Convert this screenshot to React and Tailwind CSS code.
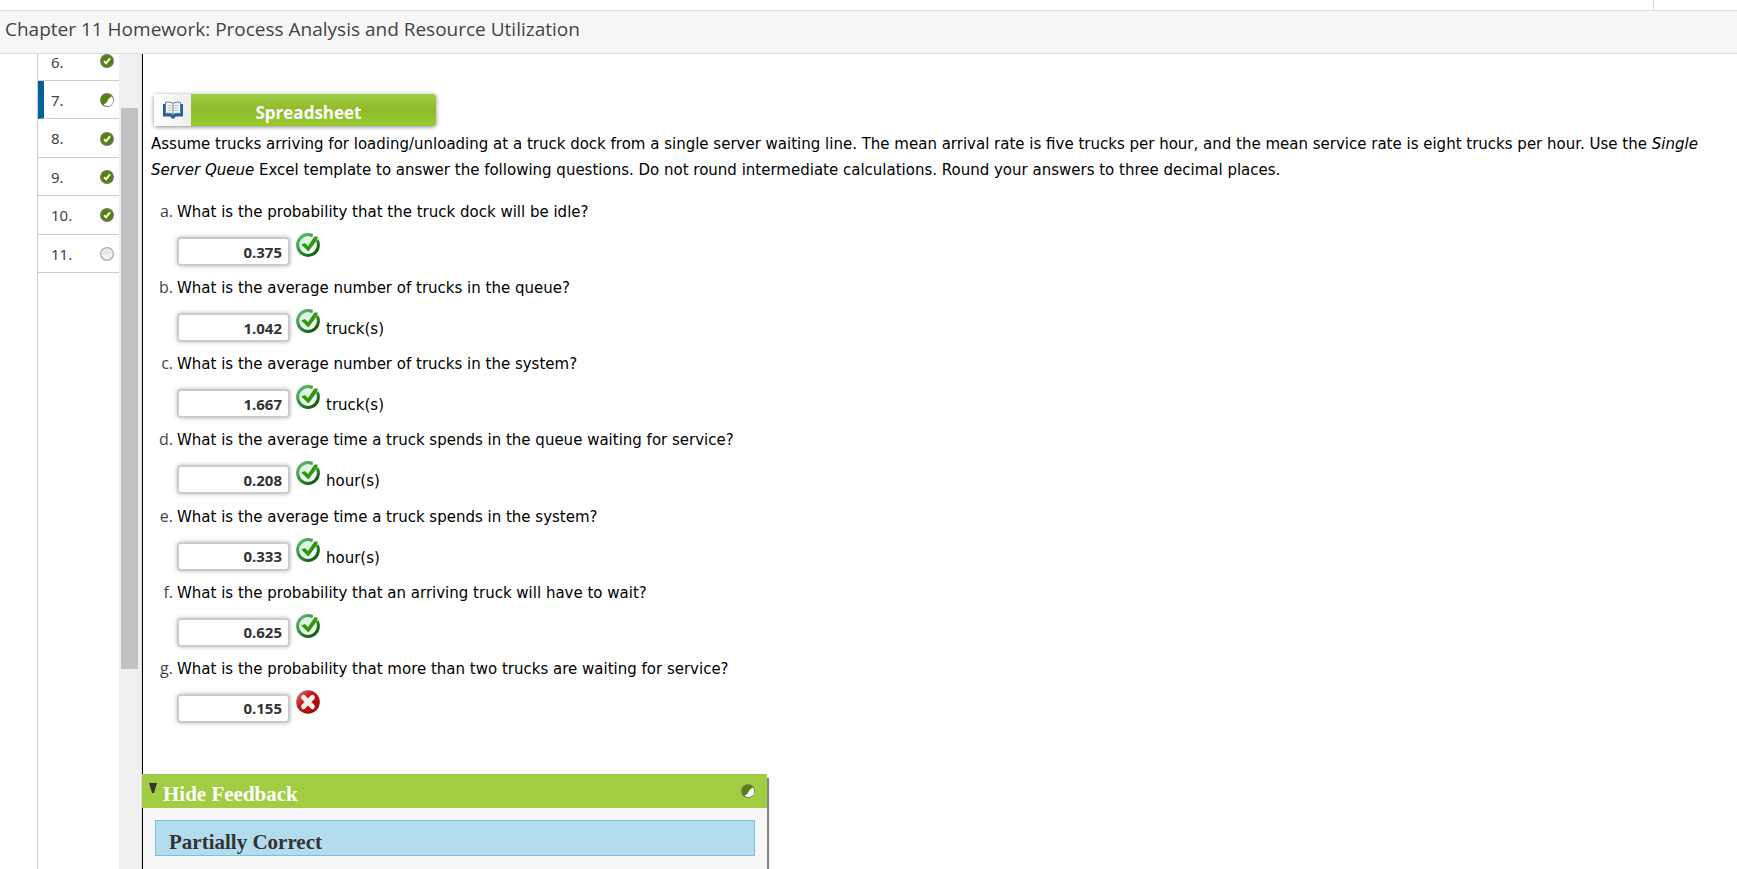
import React from 'react';

const steps = [
    { number: 7, status: 'partial', active: true },
    { number: 8, status: 'correct' },
    { number: 9, status: 'correct' },
    { number: 10, status: 'correct' },
    { number: 11, status: 'empty' },
];

const questions = [
    { letter: 'a', text: 'What is the probability that the truck dock will be idle?', value: '0.375', correct: true },
    { letter: 'b', text: 'What is the average number of trucks in the queue?', value: '1.042', unit: 'truck(s)', correct: true },
    { letter: 'c', text: 'What is the average number of trucks in the system?', value: '1.667', unit: 'truck(s)', correct: true },
    { letter: 'd', text: 'What is the average time a truck spends in the queue waiting for service?', value: '0.208', unit: 'hour(s)', correct: true },
    { letter: 'e', text: 'What is the average time a truck spends in the system?', value: '0.333', unit: 'hour(s)', correct: true },
    { letter: 'f', text: 'What is the probability that an arriving truck will have to wait?', value: '0.625', correct: true },
    { letter: 'g', text: 'What is the probability that more than two trucks are waiting for service?', value: '0.155', correct: false },
];

const StatusDot = ({ status }) => {
    if (status === 'empty') {
        return (
            <svg viewBox="0 0 14 14" className="size-3.5 shrink-0">
                <circle cx="7" cy="7" r="6.3" fill="#f1f1f1" stroke="#a8a8a8" strokeWidth="1.2" />
                <path d="M2.6 7a4.4 4.4 0 0 1 8.800 0z" fill="#e4e4e4" />
            </svg>
        );
    }
    return (
        <svg viewBox="0 0 14 14" className="size-3.5 shrink-0">
            <circle cx="7" cy="7" r="6.2" fill="#4f8500" stroke="#6d7955" strokeWidth="1.5" />
            {status === 'correct' && (
                <path d="M4 7.2 6.1 9.2 10 4.400" fill="none" stroke="#fff" strokeWidth="2" />
            )}
            {status === 'partial' && <path d="M11.6 3.6A5.6 5.6 0 0 1 3.6 11.6Q6.500 10.500 7.500 8T11.600 3.600Z" fill="#fff" />}
        </svg>
    );
};

const CorrectIcon = () => (
    <svg viewBox="0 0 24 24" className="size-6 shrink-0" role="img" aria-label="Correct">
        <defs>
            <linearGradient id="ring" x1="0" y1="0" x2="0.8" y2="1">
                <stop offset="0" stopColor="#63bd78" />
                <stop offset="0.5" stopColor="#3b9440" />
                <stop offset="1" stopColor="#0c5a10" />
            </linearGradient>
            <linearGradient id="face" x1="0" y1="0" x2="1" y2="1">
                <stop offset="0" stopColor="#cdeed6" />
                <stop offset="1" stopColor="#ffffff" />
            </linearGradient>
        </defs>
        <circle cx="12" cy="12" r="10.4" fill="url(#face)" stroke="url(#ring)" strokeWidth="3" />
        <path d="M17 1 22.800 1 22.800 6 20.500 8 16 6Z" fill="#fff" />
        <path d="M5.200 11.400 8.800 10 12 13 18.400 3.600 21.600 3.400 21.400 6.600 12.400 18.600Z" fill="#2f980c" />
    </svg>
);

const IncorrectIcon = () => (
    <svg viewBox="0 0 24 24" className="size-6 shrink-0" role="img" aria-label="Incorrect">
        <defs>
            <linearGradient id="red" x1="0" y1="0" x2="1" y2="1">
                <stop offset="0" stopColor="#e0878a" />
                <stop offset="0.4" stopColor="#c5161b" />
                <stop offset="1" stopColor="#8e0000" />
            </linearGradient>
        </defs>
        <circle cx="12" cy="12" r="11.8" fill="url(#red)" />
        <path d="M7.6 7.4 16.4 16.6M16.4 7.4 7.6 16.6" stroke="#f3eeee" strokeWidth="5" strokeLinecap="round" />
    </svg>
);

const BookIcon = () => (
    <svg viewBox="0 0 22 18" className="h-[18px] w-[22px]">
        <path d="M1 3h20v12.5h-7.5L12.5 17.5h-3L8.5 15.5H1z" fill="#2b5f92" />
        <path d="M3.500 1.5C6 .8 9 1 11 2.4 13 1 16 .8 18.500 1.5V12.600c-2.600-.6-5.500-.4-7.500.8-2-1.200-4.900-1.400-7.500-.8z" fill="#f5f6f8" stroke="#4f7eab" />
        <path d="M11 2.800V13.500" stroke="#6f8296" />
        <path d="M5.500 4.500h4M5.500 7h4M5.500 9.500h4M12.500 4.500h4M12.500 7h4M12.500 9.500h4" stroke="#b9bfc6" />
    </svg>
);

const Question = ({ question }) => (
    <li className="flex text-[15px] leading-[26px] text-black">
        <span className="w-[26px] shrink-0 pr-1 text-right font-['Open_Sans',sans-serif] text-base leading-6 text-[#444]">
            {question.letter}.
        </span>
        <div>
            <label htmlFor={`answer-${question.letter}`} className="block">{question.text}</label>
            <div className="flex items-start pt-2">
                <input
                    id={`answer-${question.letter}`}
                    defaultValue={question.value}
                    className="mt-1 h-[29px] w-[113px] rounded border-2 border-[#ccc] bg-white px-1.5 text-right font-['Open_Sans',sans-serif] text-[15px] font-bold text-[#333] shadow-[0_0_4px_#bbb]"
                />
                <span className="ml-1.5">{question.correct ? <CorrectIcon /> : <IncorrectIcon />}</span>
                {question.unit && <span className="mt-[7px] ml-1.5">{question.unit}</span>}
            </div>
        </div>
    </li>
);

export default function App() {
    return (
        <div className="flex h-screen flex-col overflow-hidden bg-white font-['DejaVu_Sans',sans-serif]">
            <div className="flex h-2.5 shrink-0 justify-end">
                <div className="w-[84px] border-l border-[#ddd]" />
            </div>
            <header className="h-11 shrink-0 border-y border-[#ddd] bg-[#f7f7f7] px-[5px]">
                <h1 className="font-['Open_Sans',sans-serif] text-[19px] leading-9 text-[#444]">
                    Chapter 11 Homework: Process Analysis and Resource Utilization
                </h1>
            </header>

            <div className="flex min-h-0 flex-1">
                {/* Question list */}
                <nav className="ml-[37px] w-[82px] shrink-0 border-l border-[#ccc] font-['Noto_Sans',sans-serif] text-[15px] text-[#444]">
                    <a href="#q6" className="flex h-[27px] items-start justify-between border-b border-[#ccc] pr-[5px] pl-[13px] leading-4">
                        6.
                        <StatusDot status="correct" />
                    </a>
                    <div className="grid h-48 auto-rows-fr">
                        {steps.map((step) => (
                            <a
                                key={step.number}
                                href={`#q${step.number}`}
                                className={`flex items-center justify-between border-b border-[#ccc] pt-px pr-[5px] ${
                                    step.active ? 'border-l-[6px] border-l-[#00629b] pl-[7px]' : 'pl-[13px]'
                                }`}
                            >
                                {step.number}.
                                <StatusDot status={step.status} />
                            </a>
                        ))}
                    </div>
                </nav>
                <div className="w-[23px] shrink-0 border-r border-[#ddd] bg-[#f0f0f0] pt-[54px] pl-0.5">
                    <div className="h-[561px] w-[17px] bg-[#c1c1c1]" />
                </div>

                {/* Assignment */}
                <main className="flex min-w-0 flex-1 flex-col border-l border-black">
                    <div className="pt-10 pr-5 pl-2">
                        <button className="ml-[3px] flex h-8 w-[282px] rounded-[3px] bg-white text-white shadow-[0_1px_4px_#888]">
                            <span className="flex h-full w-[37px] items-center justify-center bg-linear-to-r from-white to-[#eee]">
                                <BookIcon />
                            </span>
                            <span className="h-full flex-1 rounded-r-[3px] bg-linear-to-b from-[#a2cd43] via-[#8dbc2a] to-[#9acb2e] pr-2.5 text-center font-['Open_Sans',sans-serif] text-[17px] leading-[38px] font-bold">
                                Spreadsheet
                            </span>
                        </button>
                        <p className="mt-[5px] text-[15px] leading-[26px] text-black">
                            Assume trucks arriving for loading/unloading at a truck dock from a single server waiting line. The mean arrival rate is five trucks per hour, and the mean service rate is eight trucks per hour. Use the <i>Single Server Queue</i> Excel template to answer the following questions. Do not round intermediate calculations. Round your answers to three decimal places.
                        </p>
                        <ol className="mt-4 mb-[42px] grid h-[533px] auto-rows-fr">
                            {questions.map((question) => (
                                <Question key={question.letter} question={question} />
                            ))}
                        </ol>
                    </div>

                    <section className="min-h-0 w-[624px] flex-1 bg-[#f7f7f7] font-['Liberation_Serif',serif] text-[21px] font-bold shadow-[2px_4px_1px_#888]">
                        <button className="-ml-px flex h-[34px] w-[625px] items-center bg-[#a2cd43] pr-3 pl-[7px] text-white">
                            <svg viewBox="0 0 8 10" className="mb-1.5 h-2.5 w-2">
                                <path d="M0 0h8L5 10H3z" fill="#333" />
                            </svg>
                            <span className="mt-2 ml-1.5 flex-1 text-left">Hide Feedback</span>
                            <StatusDot status="partial" />
                        </button>
                        <h2 className="mx-3 mt-3 h-9 border border-[#7cc0df] bg-[#b3dcee] pl-[13px] leading-[42px] text-[#333]">
                            Partially Correct
                        </h2>
                    </section>
                </main>
            </div>
        </div>
    );
}
